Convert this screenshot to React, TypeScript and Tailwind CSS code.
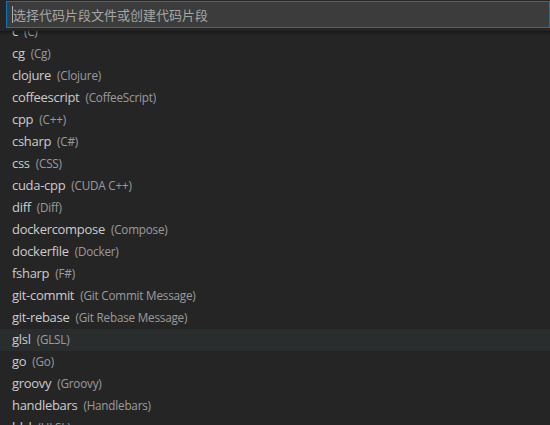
import React from 'react'

const snippets: [string, string][] = [
    ['c', 'C'],
    ['cg', 'Cg'],
    ['clojure', 'Clojure'],
    ['coffeescript', 'CoffeeScript'],
    ['cpp', 'C++'],
    ['csharp', 'C#'],
    ['css', 'CSS'],
    ['cuda-cpp', 'CUDA C++'],
    ['diff', 'Diff'],
    ['dockercompose', 'Compose'],
    ['dockerfile', 'Docker'],
    ['fsharp', 'F#'],
    ['git-commit', 'Git Commit Message'],
    ['git-rebase', 'Git Rebase Message'],
    ['glsl', 'GLSL'],
    ['go', 'Go'],
    ['groovy', 'Groovy'],
    ['handlebars', 'Handlebars'],
    ['hlsl', 'HLSL'],
    ['html', 'HTML'],
]

const App: React.FC = () => {
    const hovered = 'glsl'

    return (
        <div
            className="w-[550px] h-[425px] bg-[#252526] flex flex-col overflow-hidden text-[#cccccc]"
            style={{ fontFamily: '"Open Sans", "Noto Sans CJK SC", sans-serif' }}
        >
            {/* Input */}
            <div className="h-[31px] shrink-0 pt-[1px] pl-[6px] bg-[#252526] relative z-10">
                <div className="h-[27px] border border-[#007acc] bg-[#3c3c3c] flex items-center pl-[5px]">
                    <span className="w-px h-[17px] bg-[#aeafad]" />
                    <span className="text-[13px] text-[#a6a6a6] leading-none" style={{ fontFamily: '"Noto Sans CJK SC", sans-serif' }}>
                        选择代码片段文件或创建代码片段
                    </span>
                </div>
            </div>

            {/* List */}
            <div className="flex-1 overflow-hidden relative">
                <div className="absolute top-0 left-0 right-0 h-[4px] bg-gradient-to-b from-black/40 to-transparent z-10" />
                <div className="-mt-[10px]">
                    {snippets.map(([label, desc]) => (
                        <div
                            key={label}
                            className={`h-[22px] flex items-center pl-[12px] whitespace-nowrap ${label === hovered ? 'bg-[#2a2d2e]' : ''}`}
                        >
                            <span className="text-[13px] tracking-[-0.3px]">{label}</span>
                            <span className="text-[11.7px] ml-[6px] opacity-70 tracking-[-0.2px]">({desc})</span>
                        </div>
                    ))}
                </div>
            </div>
        </div>
    )
}

export default App
